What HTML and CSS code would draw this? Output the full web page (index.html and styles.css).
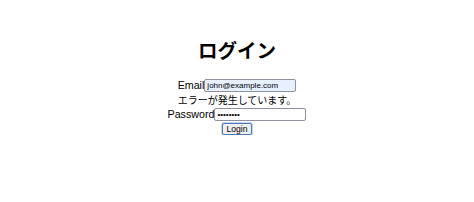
FILE: index.html
```html
<!DOCTYPE html>
<html lang="ja">
<head>
<meta charset="UTF-8" />
<meta name="viewport" content="width=device-width, initial-scale=1" />
<title>ログイン</title>
<link rel="stylesheet" href="styles.css">
</head>
<body>

<div class="login">
  <h1 class="title">ログイン</h1>
  <form class="login-form">
    <div class="field">
      <label for="email">Email</label><input id="email" class="input autofill" type="email" value="john@example.com" />
    </div>
    <p class="error">エラーが発生しています。</p>
    <div class="field">
      <label for="password">Password</label><input id="password" class="input" type="password" value="password" />
    </div>
    <button type="submit" class="btn">Login</button>
  </form>
</div>

</body>
</html>
```

FILE: styles.css
```css
* {
  margin: 0; padding: 0; box-sizing: border-box;
}
body {
  background: #fff;
  color: #000;
  font-family: 'Liberation Sans', Arial, 'Noto Sans CJK JP', sans-serif;
  font-size: 10.7px;
}
.login {
  display: flex;
  flex-direction: column;
  align-items: center;
  padding-top: 37px;
}
.title {
  font-family: 'Noto Sans CJK JP', sans-serif;
  font-size: 19.5px;
  font-weight: bold;
  line-height: 26px;
  margin-bottom: 15px;
}
.login-form {
  display: flex;
  flex-direction: column;
  align-items: center;
}
.field {
  display: flex;
  align-items: center;
  height: 14.5px;
}
.input {
  width: 92px;
  height: 13px;
  font-family: 'Liberation Sans', Arial, sans-serif;
  font-size: 8px;
  padding: 0 2px;
  border: 1px solid #8f8f9d;
  border-radius: 2px;
  background: #fff;
}
.autofill {
  background: #e8f0fe;
}
.error {
  font-family: 'Noto Sans CJK JP', sans-serif;
  font-size: 10px;
  line-height: 14.5px;
}
.btn {
  margin-top: 1px;
  padding: 0 3px;
  height: 12.5px;
  font-family: 'Liberation Sans', Arial, sans-serif;
  font-size: 8.6px;
  background: #efefef;
  border: 1px solid #4a78b8;
  border-radius: 2px;
  box-shadow: 0 0 0 1px #c5d5ee;
}
```
